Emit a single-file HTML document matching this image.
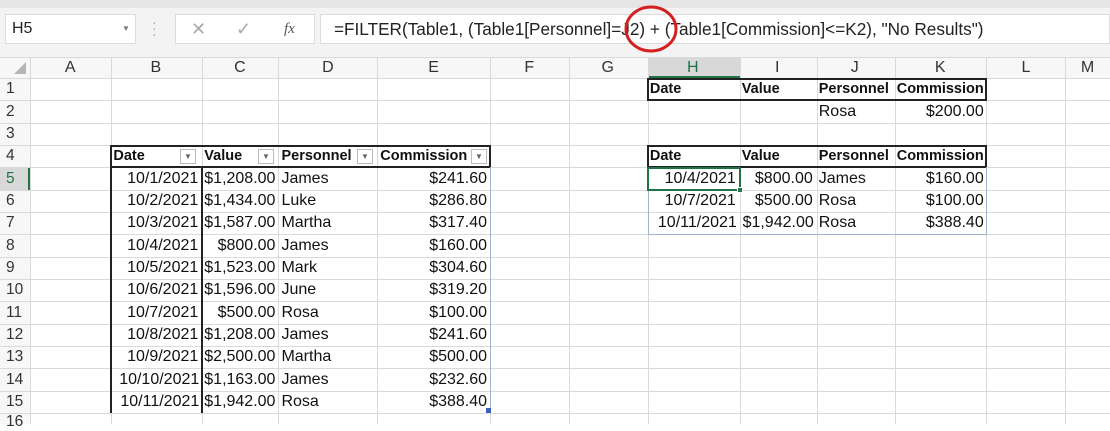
<!DOCTYPE html>
<html><head><meta charset="utf-8"><style>
*{margin:0;padding:0;box-sizing:border-box}
body{width:1110px;height:424px;overflow:hidden;background:#fff;font-family:"Liberation Sans",Arial,sans-serif;position:relative}
.a{position:absolute}
.v{position:absolute;top:57px;width:1px;height:367px;background:#d9d9d9}
.h{position:absolute;left:0;width:1110px;height:1px;background:#d9d9d9}
table{position:absolute;left:0;top:57px;border-collapse:collapse;table-layout:fixed;font-size:16px;color:#111}
td{padding:0 3px;white-space:nowrap;overflow:visible;vertical-align:middle}
td.r{text-align:right}
td.c{text-align:center;color:#333;font-size:16px}
td.rh{text-align:left;padding-left:6px;color:#333;font-size:15.5px}
td.b{font-weight:bold;font-size:14.5px}
.dd{position:absolute;width:16px;height:15px;border:1px solid #bbb;background:#fff;font-size:8px;color:#666;text-align:center;line-height:13px}
</style></head><body>
<div class="a" style="left:0;top:0;width:1110px;height:57px;background:#f3f3f3"></div>
<div class="a" style="left:0;top:0;width:1110px;height:8px;background:#e6e6e6"></div>
<div class="a" style="left:5px;top:14px;width:131px;height:30px;background:#fff;border:1px solid #dcdcdc;font-size:16px;line-height:28px;padding-left:6px;color:#222">H5<span style="position:absolute;left:116px;top:0;font-size:8px;color:#777">▼</span></div>
<div class="a" style="left:152px;top:19px;font-size:14px;color:#aaa;line-height:6px">·<br>·<br>·</div>
<div class="a" style="left:175px;top:14px;width:140px;height:30px;background:#fff;border:1px solid #dcdcdc;color:#aaa;font-size:18px;line-height:28px">
<span class="a" style="left:15px">✕</span><span class="a" style="left:60px">✓</span><span class="a" style="left:108px;color:#555;font-family:'Liberation Serif',serif;font-style:italic;font-size:15px">fx</span></div>
<div class="a" style="left:320px;top:14px;width:790px;height:30px;background:#fff;border:1px solid #dcdcdc;font-size:17.2px;line-height:28px;padding-left:13px;color:#222">=FILTER(Table1, (Table1[Personnel]=J2) + (Table1[Commission]&lt;=K2), "No Results")</div>
<div class="a" style="left:0;top:57px;width:1110px;height:21px;background:#f7f7f7"></div>
<div class="a" style="left:0;top:57px;width:30px;height:367px;background:#f7f7f7"></div>
<div class="a" style="left:648px;top:57px;width:92px;height:21px;background:#d8d8d8;border-bottom:2px solid #217346"></div>
<div class="a" style="left:0;top:167px;width:30px;height:23px;background:#d8d8d8;border-right:2px solid #217346"></div>
<div class="a" style="left:14px;top:62px;width:0;height:0;border-left:12px solid transparent;border-bottom:12px solid #b5b5b5"></div>
<div class="v" style="left:30px"></div><div class="v" style="left:111px"></div><div class="v" style="left:202px"></div><div class="v" style="left:278px"></div><div class="v" style="left:377px"></div><div class="v" style="left:490px"></div><div class="v" style="left:569px"></div><div class="v" style="left:648px"></div><div class="v" style="left:740px"></div><div class="v" style="left:817px"></div><div class="v" style="left:895px"></div><div class="v" style="left:986px"></div><div class="v" style="left:1065px"></div>
<div class="h" style="top:57px"></div><div class="h" style="top:78px"></div><div class="h" style="top:100px"></div><div class="h" style="top:123px"></div><div class="h" style="top:145px"></div><div class="h" style="top:167px"></div><div class="h" style="top:190px"></div><div class="h" style="top:212px"></div><div class="h" style="top:234px"></div><div class="h" style="top:257px"></div><div class="h" style="top:279px"></div><div class="h" style="top:301px"></div><div class="h" style="top:324px"></div><div class="h" style="top:346px"></div><div class="h" style="top:368px"></div><div class="h" style="top:391px"></div><div class="h" style="top:413px"></div>
<div class="a" style="left:110px;top:145px;width:381px;height:23px;border:2px solid #222"></div>
<div class="a" style="left:110px;top:167px;width:2px;height:246px;background:#222"></div>
<div class="a" style="left:201px;top:167px;width:2px;height:246px;background:#222"></div>
<div class="a" style="left:490px;top:167px;width:1px;height:246px;background:#9fb4cc"></div>
<div class="a" style="left:486px;top:408px;width:5px;height:5px;background:#3b5fc0"></div>
<div class="a" style="left:647px;top:78px;width:340px;height:23px;border:2px solid #222"></div>
<div class="a" style="left:647px;top:145px;width:340px;height:23px;border:2px solid #222"></div>
<div class="a" style="left:648px;top:167px;width:339px;height:68px;border:1px solid #9fb4cc;border-top:none"></div>
<div class="a" style="left:647px;top:167px;width:94px;height:24px;border:2px solid #217346"></div>
<div class="a" style="left:737px;top:187px;width:6px;height:6px;background:#217346;border:1px solid #fff"></div>
<table>
<colgroup><col style="width:30px"><col style="width:81px"><col style="width:91px"><col style="width:76px"><col style="width:99px"><col style="width:113px"><col style="width:79px"><col style="width:79px"><col style="width:92px"><col style="width:77px"><col style="width:78px"><col style="width:91px"><col style="width:79px"><col style="width:45px"></colgroup>
<tr style="height:21px"><td></td><td class="c">A</td><td class="c">B</td><td class="c">C</td><td class="c">D</td><td class="c">E</td><td class="c">F</td><td class="c">G</td><td class="c" style="color:#217346">H</td><td class="c">I</td><td class="c">J</td><td class="c">K</td><td class="c">L</td><td class="c">M</td></tr>
<tr style="height:22px"><td class="rh">1</td><td></td><td></td><td></td><td></td><td></td><td></td><td></td><td class="b">Date</td><td class="b">Value</td><td class="b">Personnel</td><td class="b">Commission</td><td></td><td></td></tr>
<tr style="height:23px"><td class="rh">2</td><td></td><td></td><td></td><td></td><td></td><td></td><td></td><td></td><td></td><td>Rosa</td><td class="r">$200.00</td><td></td><td></td></tr>
<tr style="height:22px"><td class="rh">3</td><td></td><td></td><td></td><td></td><td></td><td></td><td></td><td></td><td></td><td></td><td></td><td></td><td></td></tr>
<tr style="height:22px"><td class="rh">4</td><td></td><td class="b">Date</td><td class="b">Value</td><td class="b">Personnel</td><td class="b">Commission</td><td></td><td></td><td class="b">Date</td><td class="b">Value</td><td class="b">Personnel</td><td class="b">Commission</td><td></td><td></td></tr>
<tr style="height:23px"><td class="rh" style="color:#217346">5</td><td></td><td class="r">10/1/2021</td><td>$1,208.00</td><td>James</td><td class="r">$241.60</td><td></td><td></td><td class="r">10/4/2021</td><td class="r">$800.00</td><td>James</td><td class="r">$160.00</td><td></td><td></td></tr>
<tr style="height:22px"><td class="rh">6</td><td></td><td class="r">10/2/2021</td><td>$1,434.00</td><td>Luke</td><td class="r">$286.80</td><td></td><td></td><td class="r">10/7/2021</td><td class="r">$500.00</td><td>Rosa</td><td class="r">$100.00</td><td></td><td></td></tr>
<tr style="height:22px"><td class="rh">7</td><td></td><td class="r">10/3/2021</td><td>$1,587.00</td><td>Martha</td><td class="r">$317.40</td><td></td><td></td><td class="r" style="padding:0 2px">10/11/2021</td><td class="r" style="padding:0 2px">$1,942.00</td><td>Rosa</td><td class="r">$388.40</td><td></td><td></td></tr>
<tr style="height:23px"><td class="rh">8</td><td></td><td class="r">10/4/2021</td><td class="r">$800.00</td><td>James</td><td class="r">$160.00</td><td></td><td></td><td></td><td></td><td></td><td></td><td></td><td></td></tr>
<tr style="height:22px"><td class="rh">9</td><td></td><td class="r">10/5/2021</td><td>$1,523.00</td><td>Mark</td><td class="r">$304.60</td><td></td><td></td><td></td><td></td><td></td><td></td><td></td><td></td></tr>
<tr style="height:22px"><td class="rh">10</td><td></td><td class="r">10/6/2021</td><td>$1,596.00</td><td>June</td><td class="r">$319.20</td><td></td><td></td><td></td><td></td><td></td><td></td><td></td><td></td></tr>
<tr style="height:23px"><td class="rh">11</td><td></td><td class="r">10/7/2021</td><td class="r">$500.00</td><td>Rosa</td><td class="r">$100.00</td><td></td><td></td><td></td><td></td><td></td><td></td><td></td><td></td></tr>
<tr style="height:22px"><td class="rh">12</td><td></td><td class="r">10/8/2021</td><td>$1,208.00</td><td>James</td><td class="r">$241.60</td><td></td><td></td><td></td><td></td><td></td><td></td><td></td><td></td></tr>
<tr style="height:22px"><td class="rh">13</td><td></td><td class="r">10/9/2021</td><td>$2,500.00</td><td>Martha</td><td class="r">$500.00</td><td></td><td></td><td></td><td></td><td></td><td></td><td></td><td></td></tr>
<tr style="height:23px"><td class="rh">14</td><td></td><td class="r" style="padding:0 2px">10/10/2021</td><td>$1,163.00</td><td>James</td><td class="r">$232.60</td><td></td><td></td><td></td><td></td><td></td><td></td><td></td><td></td></tr>
<tr style="height:22px"><td class="rh">15</td><td></td><td class="r" style="padding:0 2px">10/11/2021</td><td>$1,942.00</td><td>Rosa</td><td class="r">$388.40</td><td></td><td></td><td></td><td></td><td></td><td></td><td></td><td></td></tr>
<tr style="height:14px"><td class="rh">16</td><td></td><td></td><td></td><td></td><td></td><td></td><td></td><td></td><td></td><td></td><td></td><td></td><td></td></tr>
</table>
<div class="dd" style="left:180px;top:149px">▼</div>
<div class="dd" style="left:258px;top:149px">▼</div>
<div class="dd" style="left:357px;top:149px">▼</div>
<div class="dd" style="left:471px;top:149px">▼</div>
<svg class="a" style="left:616px;top:2px" width="70" height="52"><ellipse cx="35" cy="27" rx="25" ry="22" fill="none" stroke="#d42020" stroke-width="3"/></svg>
</body></html>
